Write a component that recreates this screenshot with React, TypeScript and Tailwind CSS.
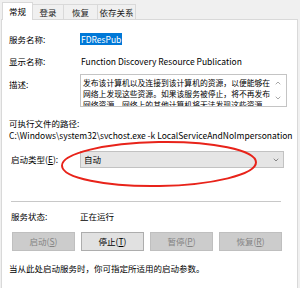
import { ChevronDown, ChevronUp } from "lucide-react";

const tabs = [
  { label: "登录", w: "w-[31px]" },
  { label: "恢复", w: "w-[34px]" },
  { label: "依存关系", w: "w-[38px]" },
];

const buttons = [
  { label: "启动", key: "S", enabled: false },
  { label: "停止", key: "T", enabled: true },
  { label: "暂停", key: "P", enabled: false },
  { label: "恢复", key: "R", enabled: false },
];

const App = () => {
  return (
    <div className="relative w-[300px] h-[288px] overflow-hidden bg-[#f0f0f0] font-['Noto_Sans_CJK_SC',sans-serif] text-[8.5px] leading-none text-black">
      {/* Tabs */}
      <div className="flex items-end h-[19px] pl-[2px]">
        <div className="relative z-10 -mb-px flex h-[18px] w-[31px] items-center justify-center border border-b-0 border-[#d9d9d9] bg-white">
          常规
        </div>
        {tabs.map((t) => (
          <div
            key={t.label}
            className={`${t.w} flex h-[15px] items-center justify-center whitespace-nowrap border border-l-0 border-b-0 border-[#d9d9d9] bg-[#f0f0f0] text-[#1a1a1a]`}
          >
            {t.label}
          </div>
        ))}
      </div>

      {/* Panel */}
      <div className="ml-px h-[272px] w-[297px] border border-[#d9d9d9] bg-white pl-[7px]">
        {/* Service name */}
        <div className="mt-[13px] flex h-[12px] items-center">
          <span className="w-[71px]">服务名称:</span>
          <span className="flex h-[12px] items-center bg-[#0078d7] px-px text-white">FDResPub</span>
        </div>

        {/* Display name */}
        <div className="mt-[10px] flex h-[12px] items-center">
          <span className="w-[72px]">显示名称:</span>
          <span>Function Discovery Resource Publication</span>
        </div>

        {/* Description */}
        <div className="mt-[7px] flex h-[33px]">
          <span className="mt-[6px] w-[71px]">描述:</span>
          <div className="flex h-[33px] w-[207px] overflow-hidden border border-[#c4c4c4]">
            <div className="flex-1 overflow-hidden whitespace-nowrap pl-[2px] pt-[2px] text-[7.8px] leading-[11px]">
              <div>发布该计算机以及连接到该计算机的资源，以便能够在</div>
              <div>网络上发现这些资源。如果该服务被停止，将不再发布</div>
              <div>网络资源，网络上的其他计算机将无法发现这些资源</div>
            </div>
            <div className="flex w-[16px] flex-col items-center justify-between py-[4px] text-[#7a7a7a]">
              <ChevronUp size={8} strokeWidth={2} />
              <ChevronDown size={8} strokeWidth={2} />
            </div>
          </div>
        </div>

        {/* Path */}
        <div className="mt-[10px] flex h-[12px] items-center">可执行文件的路径:</div>
        <div className="flex h-[12px] items-center whitespace-nowrap">
          C:\Windows\system32\svchost.exe -k LocalServiceAndNoImpersonation
        </div>

        {/* Startup type */}
        <div className="mt-[10px] flex h-[17px] items-center">
          <span className="w-[71px] pl-[2px]">
            启动类型(<span className="underline">E</span>):
          </span>
          <div className="flex h-[17px] w-[204px] items-center justify-between border border-[#c2c2c2] bg-[#e5e5e5] pl-[3px] pr-[3px]">
            <span>自动</span>
            <ChevronDown size={8} strokeWidth={2} className="text-[#555]" />
          </div>
        </div>

        {/* Separator */}
        <div className="ml-[2px] mt-[33px] h-px w-[270px] bg-[#c8c8c8]" />

        {/* Status */}
        <div className="mt-[8px] flex h-[12px] items-center pl-[2px]">
          <span className="w-[69px]">服务状态:</span>
          <span>正在运行</span>
        </div>

        {/* Buttons */}
        <div className="ml-[3px] mt-[10px] flex gap-[6px]">
          {buttons.map((b) => (
            <div
              key={b.label}
              className={
                b.enabled
                  ? "flex h-[19px] w-[63px] items-center justify-center border border-[#adadad] bg-[#e1e1e1] text-black"
                  : "flex h-[19px] w-[63px] items-center justify-center border border-[#bfbfbf] bg-[#cccccc] text-[#838383]"
              }
            >
              {b.label}(<span className="underline">{b.key}</span>)
            </div>
          ))}
        </div>

        {/* Hint */}
        <div className="mt-[11px] flex h-[12px] items-center">当从此处启动服务时，你可指定所适用的启动参数。</div>
      </div>

      {/* Red annotation ellipse */}
      <svg className="pointer-events-none absolute left-0 top-0" width="300" height="288">
        <ellipse
          cx="159"
          cy="164"
          rx="97"
          ry="22"
          fill="none"
          stroke="#e8231a"
          strokeWidth="2"
          transform="rotate(-1 159 164)"
        />
      </svg>
    </div>
  );
};

export default App;
